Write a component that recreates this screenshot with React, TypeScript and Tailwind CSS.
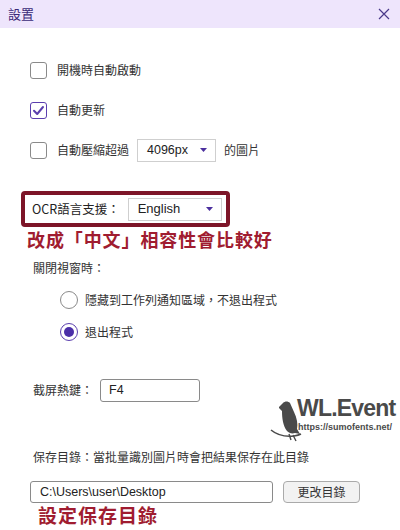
import React from "react";

const font = { fontFamily: '"Noto Sans CJK TC", "Noto Sans", sans-serif' };

function Check({ checked }: { checked?: boolean }) {
  return (
    <div
      className={
        "w-[17px] h-[17px] rounded-[3px] border flex items-center justify-center bg-white " +
        (checked ? "border-[#5b3fae] border-[1.5px]" : "border-[#8a8a8a]")
      }
    >
      {checked && (
        <svg width="13" height="13" viewBox="0 0 13 13">
          <path d="M2 6.8 L5.2 10 L11 3" fill="none" stroke="#5b3fae" strokeWidth="2" strokeLinecap="round" strokeLinejoin="round" />
        </svg>
      )}
    </div>
  );
}

function Arrow() {
  return (
    <svg width="7" height="4" viewBox="0 0 7 4">
      <path d="M0 0 L7 0 L3.5 4 Z" fill="#4b2f9e" />
    </svg>
  );
}

function Radio({ checked }: { checked?: boolean }) {
  return (
    <div
      className={
        "w-[18px] h-[18px] rounded-full border flex items-center justify-center bg-white " +
        (checked ? "border-[#5b3fae] border-[1.5px]" : "border-[#8a8a8a]")
      }
    >
      {checked && <div className="w-[10px] h-[10px] rounded-full bg-[#4b2fa8]" />}
    </div>
  );
}

export default function App() {
  return (
    <div className="relative w-[400px] h-[530px] bg-white overflow-hidden text-[12px] text-[#333]" style={font}>
      <div className="h-[28px] bg-[#eee5fc] flex items-center justify-between pl-[8px] pr-[10px]">
        <span className="text-[13px] text-[#3a2a78]">設置</span>
        <svg width="12" height="12" viewBox="0 0 12 12">
          <path d="M1 1 L11 11 M11 1 L1 11" stroke="#4a3a8a" strokeWidth="1.2" />
        </svg>
      </div>

      <div className="flex flex-col">
        <div className="mt-[30px] h-[24px] flex items-center pl-[30px] gap-[10px]">
          <Check />
          <span>開機時自動啟動</span>
        </div>
        <div className="mt-[16px] h-[24px] flex items-center pl-[30px] gap-[10px]">
          <Check checked />
          <span>自動更新</span>
        </div>
        <div className="mt-[16px] h-[24px] flex items-center pl-[30px] gap-[10px]">
          <Check />
          <span>自動壓縮超過</span>
          <div className="w-[79px] h-[23px] border border-[#cfcfcf] flex items-center justify-between pl-[9px] pr-[8px] ml-[-2px]">
            <span className="text-[12.5px] text-[#222]" style={{ fontFamily: '"Liberation Sans", sans-serif' }}>4096px</span>
            <Arrow />
          </div>
          <span className="ml-[-2px]">的圖片</span>
        </div>

        <div className="mt-[29px] ml-[21px] w-[209px] h-[36px] border-[4px] border-[#7d1528] rounded-[4px] flex items-center pl-[7px] gap-[8px]">
          <span className="text-[12.5px] text-[#222]">OCR語言支援：</span>
          <div className="w-[94px] h-[23px] border border-[#cfcfcf] flex items-center justify-between pl-[9px] pr-[8px]">
            <span className="text-[13px] text-[#222]" style={{ fontFamily: '"Liberation Sans", sans-serif' }}>English</span>
            <Arrow />
          </div>
        </div>
        <div className="ml-[27px] h-[23px] flex items-center text-[18px] font-bold tracking-[0.9px] text-[#a01c30] leading-none">
          改成「中文」相容性會比較好
        </div>

        <div className="mt-[8px] ml-[33px] h-[20px] flex items-center">關閉視窗時：</div>
        <div className="mt-[10px] h-[24px] flex items-center pl-[60px] gap-[7px]">
          <Radio />
          <span>隱藏到工作列通知區域，不退出程式</span>
        </div>
        <div className="mt-[8px] h-[24px] flex items-center pl-[60px] gap-[7px]">
          <Radio checked />
          <span>退出程式</span>
        </div>

        <div className="mt-[34px] h-[24px] flex items-center pl-[33px]">
          <span className="w-[67px]">截屏熱鍵：</span>
          <div className="w-[100px] h-[23px] border border-[#8a8a8a] rounded-[3px] flex items-center pl-[8px] text-[12.5px] text-[#222]" style={{ fontFamily: '"Liberation Sans", sans-serif' }}>
            F4
          </div>
        </div>

        <div className="mt-[45px] h-[20px] flex items-center pl-[33px]">保存目錄：當批量識別圖片時會把結果保存在此目錄</div>

        <div className="mt-[14px] h-[22px] flex items-center pl-[30px]">
          <div className="w-[243px] h-[22px] border border-[#8a8a8a] rounded-[3px] flex items-center pl-[9px] text-[12.5px] text-[#222]" style={{ fontFamily: '"Liberation Sans", sans-serif' }}>
            C:\Users\user\Desktop
          </div>
          <div className="ml-[10px] w-[77px] h-[22px] border border-[#aaa] rounded-[4px] bg-[#f2f2f2] flex items-center justify-center">
            更改目錄
          </div>
        </div>
        <div className="ml-[38px] h-[22px] flex items-center text-[19px] font-bold tracking-[1px] text-[#a01c30] leading-none">
          設定保存目錄
        </div>
      </div>

      <div className="absolute left-[270px] top-[396px] w-[130px] h-[48px]">
        <svg className="absolute left-[0px] top-[2px]" width="32" height="46" viewBox="0 0 32 46">
          <path d="M9 9 L13 5 C15 3 18 3 20 5 L24 14 C27 20 28 26 27 31 L30 36 L25 35 C22 36 19 35 17 33 C13 28 12 20 12 13 L9 10 Z" fill="#4a4a4a" />
          <path d="M1 32 C7 37 15 39 24 38 C27 37.5 29 37 31 36" stroke="#4a4a4a" strokeWidth="1.6" fill="none" />
          <path d="M19 36 L21 42 M23 37 L26 43" stroke="#4a4a4a" strokeWidth="1.4" fill="none" />
        </svg>
        <div className="absolute left-[27px] top-[1px] text-[23px] font-black text-[#4a4a4a] leading-none tracking-[-0.8px]" style={{ fontFamily: '"Liberation Sans", sans-serif', fontWeight: 900 }}>
          WL.Event
        </div>
        <div className="absolute left-[28px] top-[27px] text-[9px] font-bold text-[#4a4a4a] leading-none" style={{ fontFamily: '"Liberation Sans", sans-serif' }}>
          https://sumofents.net/
        </div>
      </div>
    </div>
  );
}
